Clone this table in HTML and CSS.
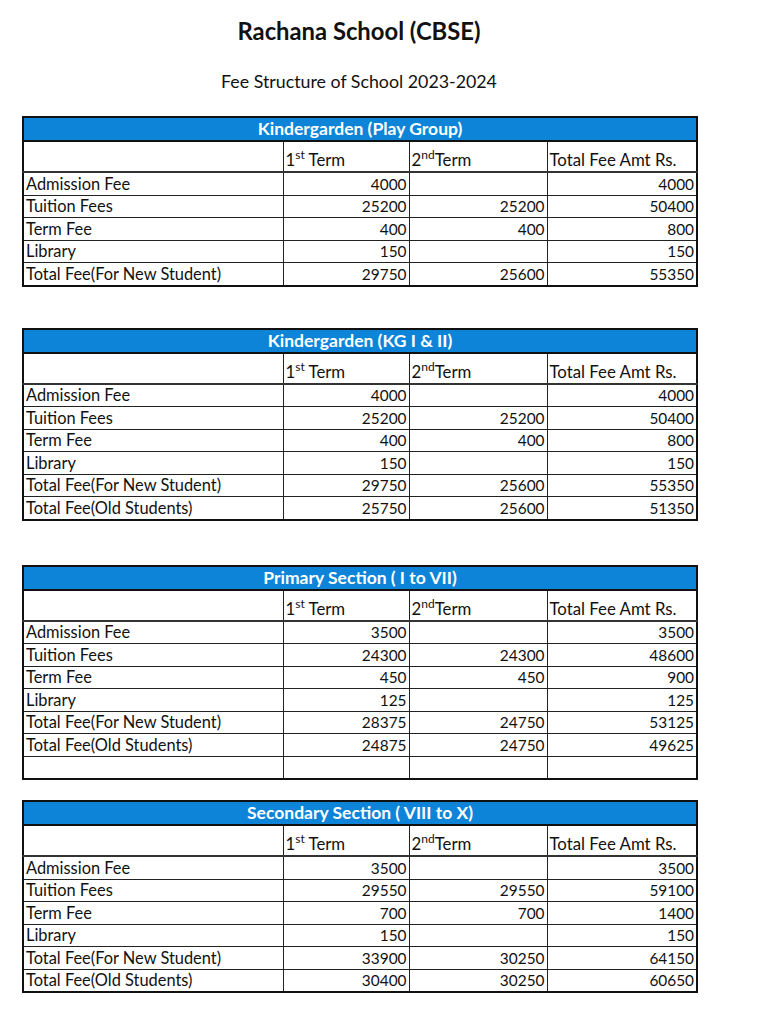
FILE: index.html
```html
<!DOCTYPE html>
<html>
<head>
<meta charset="utf-8">
<link rel="stylesheet" href="styles.css">
</head>
<body>
<div class="page">
  <h1 class="title">Rachana School (CBSE)</h1>
  <h2 class="subtitle">Fee Structure of School 2023-2024</h2>

  <table class="fees t1">
    <colgroup><col class="c1"><col class="c2"><col class="c3"><col class="c4"></colgroup>
    <tr class="head"><th colspan="4">Kindergarden (Play Group)</th></tr>
    <tr class="terms"><td></td><td>1<sup>st</sup> Term</td><td>2<sup>nd</sup>Term</td><td>Total Fee Amt Rs.</td></tr>
    <tr><td>Admission Fee</td><td class="n">4000</td><td class="n"></td><td class="n">4000</td></tr>
    <tr><td>Tuition Fees</td><td class="n">25200</td><td class="n">25200</td><td class="n">50400</td></tr>
    <tr><td>Term Fee</td><td class="n">400</td><td class="n">400</td><td class="n">800</td></tr>
    <tr><td>Library</td><td class="n">150</td><td class="n"></td><td class="n">150</td></tr>
    <tr><td>Total Fee(For New Student)</td><td class="n">29750</td><td class="n">25600</td><td class="n">55350</td></tr>
  </table>

  <table class="fees t2">
    <colgroup><col class="c1"><col class="c2"><col class="c3"><col class="c4"></colgroup>
    <tr class="head"><th colspan="4">Kindergarden (KG I &amp; II)</th></tr>
    <tr class="terms"><td></td><td>1<sup>st</sup> Term</td><td>2<sup>nd</sup>Term</td><td>Total Fee Amt Rs.</td></tr>
    <tr><td>Admission Fee</td><td class="n">4000</td><td class="n"></td><td class="n">4000</td></tr>
    <tr><td>Tuition Fees</td><td class="n">25200</td><td class="n">25200</td><td class="n">50400</td></tr>
    <tr><td>Term Fee</td><td class="n">400</td><td class="n">400</td><td class="n">800</td></tr>
    <tr><td>Library</td><td class="n">150</td><td class="n"></td><td class="n">150</td></tr>
    <tr><td>Total Fee(For New Student)</td><td class="n">29750</td><td class="n">25600</td><td class="n">55350</td></tr>
    <tr><td>Total Fee(Old Students)</td><td class="n">25750</td><td class="n">25600</td><td class="n">51350</td></tr>
  </table>

  <table class="fees t3">
    <colgroup><col class="c1"><col class="c2"><col class="c3"><col class="c4"></colgroup>
    <tr class="head"><th colspan="4">Primary Section ( I to VII)</th></tr>
    <tr class="terms"><td></td><td>1<sup>st</sup> Term</td><td>2<sup>nd</sup>Term</td><td>Total Fee Amt Rs.</td></tr>
    <tr><td>Admission Fee</td><td class="n">3500</td><td class="n"></td><td class="n">3500</td></tr>
    <tr><td>Tuition Fees</td><td class="n">24300</td><td class="n">24300</td><td class="n">48600</td></tr>
    <tr><td>Term Fee</td><td class="n">450</td><td class="n">450</td><td class="n">900</td></tr>
    <tr><td>Library</td><td class="n">125</td><td class="n"></td><td class="n">125</td></tr>
    <tr><td>Total Fee(For New Student)</td><td class="n">28375</td><td class="n">24750</td><td class="n">53125</td></tr>
    <tr><td>Total Fee(Old Students)</td><td class="n">24875</td><td class="n">24750</td><td class="n">49625</td></tr>
    <tr><td></td><td></td><td></td><td></td></tr>
  </table>

  <table class="fees t4">
    <colgroup><col class="c1"><col class="c2"><col class="c3"><col class="c4"></colgroup>
    <tr class="head"><th colspan="4">Secondary Section ( VIII to X)</th></tr>
    <tr class="terms"><td></td><td>1<sup>st</sup> Term</td><td>2<sup>nd</sup>Term</td><td>Total Fee Amt Rs.</td></tr>
    <tr><td>Admission Fee</td><td class="n">3500</td><td class="n"></td><td class="n">3500</td></tr>
    <tr><td>Tuition Fees</td><td class="n">29550</td><td class="n">29550</td><td class="n">59100</td></tr>
    <tr><td>Term Fee</td><td class="n">700</td><td class="n">700</td><td class="n">1400</td></tr>
    <tr><td>Library</td><td class="n">150</td><td class="n"></td><td class="n">150</td></tr>
    <tr><td>Total Fee(For New Student)</td><td class="n">33900</td><td class="n">30250</td><td class="n">64150</td></tr>
    <tr><td>Total Fee(Old Students)</td><td class="n">30400</td><td class="n">30250</td><td class="n">60650</td></tr>
  </table>
</div>
</body>
</html>
```
FILE: styles.css
```css
html, body {
  margin: 0;
  padding: 0;
  background: #ffffff;
}

body {
  font-family: Lato, "Open Sans", sans-serif;
  color: #111111;
}

.page {
  width: 674px;
  margin-left: 22px;
  padding-top: 16px;
}

.title {
  margin: 0;
  text-align: center;
  font-size: 23.8px;
  line-height: 30px;
  font-weight: 700;
  color: #111;
}

.subtitle {
  margin: 24px 0 0 0;
  text-align: center;
  font-size: 17.8px;
  line-height: 22px;
  font-weight: 400;
  color: #111;
}

.fees {
  width: 674px;
  border-collapse: collapse;
  table-layout: fixed;
  border: 2px solid #111;
  font-size: 16.4px;
}

.c1 { width: 260px; }
.c2 { width: 126px; }
.c3 { width: 138px; }
.c4 { width: 150px; }

.t1 { margin-top: 24px; }
.t2 { margin-top: 41px; }
.t3 { margin-top: 44px; }
.t4 { margin-top: 20px; }

.fees th,
.fees td {
  border: 1px solid #222;
  padding: 0 2px;
  height: 21.5px;
  line-height: 20px;
  white-space: nowrap;
  overflow: hidden;
}

.fees .head th {
  background: #0d84d8;
  color: #ffffff;
  font-weight: 700;
  font-size: 17.5px;
  height: 22px;
  text-align: center;
  border: 2px solid #111;
}

.fees .terms td {
  height: 28px;
  font-size: 16.8px;
  vertical-align: bottom;
  padding-bottom: 1px;
  border-bottom: 2px solid #333;
}

.fees sup {
  font-size: 12px;
  line-height: 0;
  vertical-align: 7px;
}

.fees .n {
  text-align: right;
  font-size: 15.4px;
}
```
